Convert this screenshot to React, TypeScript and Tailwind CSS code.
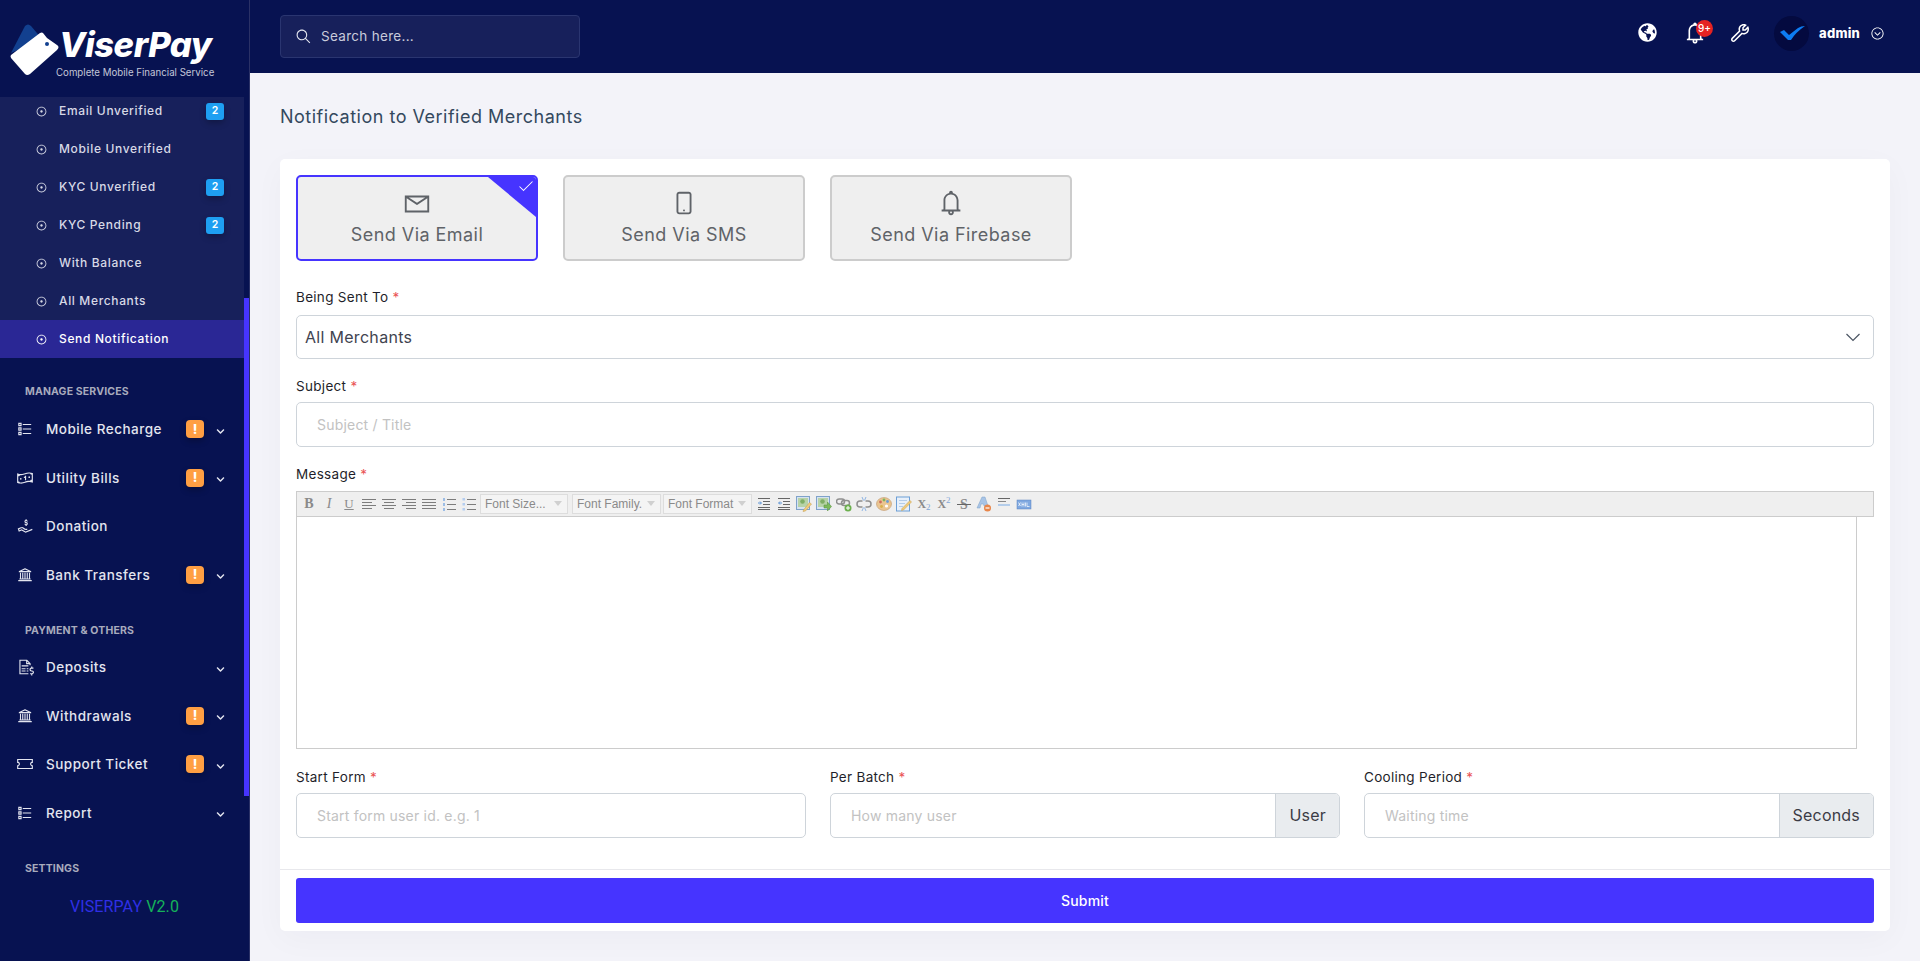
import React from 'react';
import { FaChevronDown, FaGlobeAmericas } from 'react-icons/fa';
import {
  LiaBell,
  LiaCheckSolid,
  LiaChevronCircleDownSolid,
  LiaDotCircle,
  LiaEnvelope,
  LiaFileInvoiceDollarSolid,
  LiaHandHoldingUsdSolid,
  LiaListSolid,
  LiaMobileSolid,
  LiaMoneyBillWaveAltSolid,
  LiaSearchSolid,
  LiaTicketAltSolid,
  LiaUniversitySolid,
  LiaWrenchSolid,
} from 'react-icons/lia';

const subMenu = [
  { label: 'Email Unverified', badge: true },
  { label: 'Mobile Unverified' },
  { label: 'KYC Unverified', badge: true },
  { label: 'KYC Pending', badge: true },
  { label: 'With Balance' },
  { label: 'All Merchants' },
  { label: 'Send Notification', active: true },
];

const services = [
  { label: 'Mobile Recharge', icon: LiaListSolid, warn: true, arrow: true },
  { label: 'Utility Bills', icon: LiaMoneyBillWaveAltSolid, warn: true, arrow: true },
  { label: 'Donation', icon: LiaHandHoldingUsdSolid },
  { label: 'Bank Transfers', icon: LiaUniversitySolid, warn: true, arrow: true },
];

const payments = [
  { label: 'Deposits', icon: LiaFileInvoiceDollarSolid, arrow: true },
  { label: 'Withdrawals', icon: LiaUniversitySolid, warn: true, arrow: true },
  { label: 'Support Ticket', icon: LiaTicketAltSolid, warn: true, arrow: true },
  { label: 'Report', icon: LiaListSolid, arrow: true },
];

const SectionTitle = ({ children }: { children: React.ReactNode }) => (
  <div className="flex h-5 items-center pt-[2px] pl-[25px] text-[10.5px] font-bold tracking-[0.15px] text-[#a8abbd]">{children}</div>
);

const MenuRow = ({ item }: { item: { label: string; icon: React.ElementType; warn?: boolean; arrow?: boolean } }) => {
  const Icon = item.icon;
  return (
    <div className="flex h-[48.5px] items-center pl-[16px] text-[#e3e5ef]">
      <Icon className="w-[18px] shrink-0 text-[18px]" />
      <span className="ml-[12px] flex-1 text-[13.5px] font-medium tracking-[0.5px]">{item.label}</span>
      {item.warn && (
        <span className="flex h-[18px] w-[18px] items-center justify-center rounded-[4px] bg-[#ff9f43] text-[13px] font-extrabold text-white shadow-[0_3px_6px_rgba(0,0,0,0.25)]">
          !
        </span>
      )}
      {item.arrow && <FaChevronDown className="mt-[4px] mr-[19px] ml-[12px] text-[9px] text-[#e3e5ef]" />}
    </div>
  );
};

const Req = ({ label }: { label: string }) => (
  <label className="block h-5 text-[13.5px] leading-5 font-normal tracking-[0.3px] text-[#1f1f2b]">
    {label} <span className="text-[#ea5455]">*</span>
  </label>
);

const MethodButton = ({ label, icon, active }: { label: string; icon: React.ReactNode; active?: boolean }) => (
  <div
    className={`relative flex h-[86px] w-[242px] flex-col items-center overflow-hidden rounded-[5px] border-2 bg-[#efefef] text-[#5f6368] ${
      active ? 'border-[#4634ff]' : 'border-[#cccccc]'
    }`}
  >
    {active && (
      <span className="absolute top-0 right-0 h-[40px] w-[48px] bg-[#4634ff] [clip-path:polygon(0_0,100%_0,100%_100%)]">
        <LiaCheckSolid className="absolute top-[1px] right-[2px] text-[16px] text-white" />
      </span>
    )}
    <span className="mt-[12px] flex h-[28px] items-center text-[30px]">{icon}</span>
    <span className="mt-[4px] text-[18px] font-normal tracking-[0.45px]">{label}</span>
  </div>
);

const Line = ({ y, x1 = 1, x2 = 15, c = '#7c7c7c' }: { y: number; x1?: number; x2?: number; c?: string }) => (
  <line x1={x1} x2={x2} y1={y} y2={y} stroke={c} strokeWidth="1" />
);

const Ico = ({ children }: { children: React.ReactNode }) => (
  <span className="flex w-5 shrink-0 items-center justify-center">
    <svg width="16" height="16" viewBox="0 0 16 16">
      {children}
    </svg>
  </span>
);

const Glyph = ({ children, className }: { children: React.ReactNode; className: string }) => (
  <span className={`flex w-5 shrink-0 items-center justify-center font-['Liberation_Serif',serif] text-[#8a8a8a] ${className}`}>
    {children}
  </span>
);

const FontSelect = ({ label, width }: { label: string; width: string }) => (
  <span className={`mr-[1px] ml-[1px] flex h-[20px] shrink-0 items-center justify-between border border-[#dddddd] bg-[#f4f4f4] pr-[5px] pl-[4px] font-['Liberation_Sans',sans-serif] text-[12px] text-[#8a8a8a] ${width}`}>
    <span>{label}</span>
    <span className="h-0 w-0 border-x-[4px] border-t-[5px] border-x-transparent border-t-[#d0d0d0]" />
  </span>
);

const EditorToolbar = () => (
  <div className="flex h-[26px] items-center border border-[#cccccc] bg-[#efefef] pl-[2px]">
    <Glyph className="text-[14px] font-bold">B</Glyph>
    <Glyph className="text-[14px] italic">I</Glyph>
    <Glyph className="text-[13px] underline">U</Glyph>
    <Ico>
      <Line y={3.5} /><Line y={6.5} x2={11} /><Line y={9.5} /><Line y={12.5} x2={11} />
    </Ico>
    <Ico>
      <Line y={3.5} /><Line y={6.5} x1={3} x2={13} /><Line y={9.5} /><Line y={12.5} x1={3} x2={13} />
    </Ico>
    <Ico>
      <Line y={3.5} /><Line y={6.5} x1={5} /><Line y={9.5} /><Line y={12.5} x1={5} />
    </Ico>
    <Ico>
      <Line y={3.5} /><Line y={6.5} /><Line y={9.5} /><Line y={12.5} />
    </Ico>
    <Ico>
      <Line y={3.5} x1={6} /><Line y={8.5} x1={6} /><Line y={13.5} x1={6} />
      <rect x="2" y="2" width="2" height="3" fill="#9cbde6" /><rect x="2" y="7" width="2" height="3" fill="#9cbde6" /><rect x="2" y="12" width="2" height="3" fill="#9cbde6" />
    </Ico>
    <Ico>
      <Line y={3.5} x1={6} /><Line y={8.5} x1={6} /><Line y={13.5} x1={6} />
      <rect x="1.5" y="2" width="2.5" height="2.5" fill="#b4cdf0" /><rect x="1.5" y="7" width="2.5" height="2.5" fill="#b4cdf0" /><rect x="1.5" y="12" width="2.5" height="2.5" fill="#b4cdf0" />
    </Ico>
    <FontSelect label="Font Size..." width="w-[88px]" />
    <span className="w-[2px] shrink-0" />
    <FontSelect label="Font Family." width="w-[89px]" />
    <FontSelect label="Font Format" width="w-[89px]" />
    <span className="w-[1px] shrink-0" />
    <Ico>
      <Line y={2.5} x1={2} x2={14} c="#666" /><Line y={5.5} x1={7} x2={14} c="#666" /><Line y={8.5} x1={7} x2={14} c="#666" /><Line y={11.5} x1={2} x2={14} c="#666" /><Line y={13.5} x1={2} x2={14} c="#666" />
      <path d="M2 7h3M4 5.5L5.5 7 4 8.5" stroke="#5b93d6" fill="none" />
    </Ico>
    <Ico>
      <Line y={2.5} x1={2} x2={14} c="#666" /><Line y={5.5} x1={7} x2={14} c="#666" /><Line y={8.5} x1={7} x2={14} c="#666" /><Line y={11.5} x1={2} x2={14} c="#666" /><Line y={13.5} x1={2} x2={14} c="#666" />
      <path d="M6 7H3M4 5.5L2.5 7 4 8.5" stroke="#5b93d6" fill="none" />
    </Ico>
    <Ico>
      <rect x="0.5" y="0.5" width="13" height="13" fill="#d5e2f2" stroke="#7fa2c9" />
      <rect x="2" y="2" width="10" height="9" fill="#b7d3a8" />
      <circle cx="6.500" cy="5.500" r="2.300" fill="#7fae66" />
      <path d="M7.500 14l6-7.500 2 1.500-6 7-2.500.5z" fill="#f0cc7c" stroke="#c49a4a" strokeWidth="0.500" />
    </Ico>
    <Ico>
      <rect x="0.5" y="0.5" width="13" height="13" fill="#d5e2f2" stroke="#7fa2c9" />
      <rect x="2" y="2" width="10" height="9" fill="#b7d3a8" />
      <circle cx="6.500" cy="5.500" r="2.300" fill="#7fae66" />
      <path d="M8 9h3.500V6l4 4.500-4 4.500v-3H8z" fill="#7cba5c" stroke="#568f3c" strokeWidth="0.500" />
    </Ico>
    <Ico>
      <rect x="0.5" y="3" width="8" height="5" rx="2.500" fill="none" stroke="#8f8f8f" strokeWidth="1.500" />
      <rect x="5.500" y="4.500" width="8" height="5" rx="2.500" fill="none" stroke="#8f8f8f" strokeWidth="1.500" />
      <circle cx="12" cy="12" r="3.500" fill="#6cb04e" />
      <path d="M12 10v4M10 12h4" stroke="#fff" strokeWidth="1" />
    </Ico>
    <Ico>
      <path d="M6.500 5H4a3 3 0 000 6h2.500M9.500 5H12a3 3 0 010 6H9.500" fill="none" stroke="#8f8f8f" strokeWidth="1.500" />
      <path d="M6 1l1.500 3.500M10 1L8.500 4.500M6 15l1.500-3.500M10 15l-1.500-3.500" stroke="#8eb4e3" strokeWidth="1" />
    </Ico>
    <Ico>
      <ellipse cx="8" cy="8" rx="7.500" ry="6.500" fill="#eac591" stroke="#b98a5a" strokeWidth="0.500" />
      <circle cx="4.500" cy="6" r="1.400" fill="#cf6c5c" /><circle cx="8" cy="4" r="1.400" fill="#7fb45e" /><circle cx="11.500" cy="5.500" r="1.400" fill="#6a9bd6" /><circle cx="10.500" cy="10" r="1.600" fill="#fff" /><circle cx="5.500" cy="10.500" r="1.400" fill="#d8b04a" />
    </Ico>
    <Ico>
      <rect x="0.5" y="1" width="13" height="14" fill="#e8f0fa" stroke="#6d9fd6" />
      <Line y={4.5} x1={3} x2={11} c="#b4cdea" /><Line y={7.5} x1={3} x2={9} c="#b4cdea" /><Line y={10.5} x1={3} x2={7} c="#b4cdea" />
      <path d="M6 12.500l8-8 1.500 1.500-8 8-2 .5z" fill="#f0cc7c" stroke="#c49a4a" strokeWidth="0.500" />
    </Ico>
    <Glyph className="text-[12px] font-bold">
      <span>X<sub className="text-[9px] font-normal text-[#7fa8d8]">2</sub></span>
    </Glyph>
    <Glyph className="text-[12px] font-bold">
      <span>X<sup className="text-[9px] font-normal text-[#7fa8d8]">2</sup></span>
    </Glyph>
    <Ico>
      <text x="8" y="12.500" textAnchor="middle" fontFamily="Liberation Serif, serif" fontWeight="700" fontSize="14" fill="#8a8a8a">S</text>
      <line x1="1" x2="15" y1="8.500" y2="8.500" stroke="#666" />
    </Ico>
    <Ico>
      <path d="M1 12L6 1h3l3 9H8l-.5-2H5l-1 4z" fill="#a8c4e6" stroke="#7fa2c9" strokeWidth="0.500" />
      <circle cx="11.500" cy="12" r="3.500" fill="#e8864a" />
      <path d="M9.500 12h4" stroke="#fff" strokeWidth="1.200" />
    </Ico>
    <Ico>
      <Line y={2.500} x1={2} x2={14} c="#666" /><Line y={5.500} x1={2} x2={10} c="#888" /><rect x="2" y="8" width="12" height="2" fill="#b4cdea" />
    </Ico>
    <Ico>
      <rect x="1" y="4" width="14" height="9" fill="#7fa8e0" stroke="#5b83c0" strokeWidth="0.500" />
      <path d="M2.500 6.500l2 3.500M4.500 6.500l-2 3.500M6 6.500v4M6 8.500h2M8 6.500v4M9.500 6.500v4M11 6.500v4M11 10.500h2.500" stroke="#fff" strokeWidth="0.700" fill="none" />
    </Ico>
  </div>
);

const Addon = ({ children }: { children: React.ReactNode }) => (
  <span className="flex items-center border-l border-[#ced4da] bg-[#e9ecef] px-[13px] text-[16px] tracking-[0.2px] text-[#3b3b45]">{children}</span>
);

export default function App() {
  return (
    <div className="flex h-[961px] overflow-hidden bg-[#f3f3f9] font-[Inter,sans-serif]">
      {/* sidebar */}
      <aside className="relative flex h-full w-[250px] shrink-0 flex-col border-r border-[#2a3166] bg-[#071251]">
        <div className="relative z-10 flex h-[97px] shrink-0 bg-[#071251] pt-[24px] pl-[10px]">
          <svg width="50" height="54" viewBox="0 0 50 54" className="shrink-0">
            <path d="M1 29L15 2q3-3 6 0l11 13z" fill="#12408f" />
            <path d="M1 31L30 9q2-1 3 0l4 5 10 7q3 2 0 5L20 50q-3 2-5 0L1 34q-1-2 0-3z" fill="#ffffff" />
            <circle cx="37" cy="20" r="2" fill="#12408f" />
          </svg>
          <div className="-ml-[1px] flex flex-col">
            <span className="text-[34.5px] leading-[42px] font-extrabold tracking-[-0.5px] text-white italic">ViserPay</span>
            <span className="-ml-[3px] text-[9.7px] leading-[13px] text-[#c3c6d8]">Complete Mobile Financial Service</span>
          </div>
        </div>

        <div className="w-[244px] overflow-hidden">
          <div className="-mt-[5px] bg-[#17205b]">
            {subMenu.map(item => (
              <div
                key={item.label}
                className={`flex h-[38px] items-center pl-[35px] text-[12px] font-medium tracking-[0.65px] text-[#d7d9e6] ${
                  item.active ? 'bg-[#2a2795] text-white' : ''
                }`}
              >
                <LiaDotCircle className="text-[13px]" />
                <span className="ml-[11px] flex-1">{item.label}</span>
                {item.badge && (
                  <span className="mr-[20px] flex h-[17px] w-[18px] items-center justify-center rounded-[3px] bg-[#1e9ff2] text-[10.5px] font-semibold tracking-normal text-white shadow-[0_3px_6px_rgba(0,0,0,0.25)]">
                    2
                  </span>
                )}
              </div>
            ))}
          </div>

          <div className="mt-[23px]">
            <SectionTitle>MANAGE SERVICES</SectionTitle>
            <div className="mt-[4px]">
              {services.map(item => (
                <MenuRow key={item.label} item={item} />
              ))}
            </div>
          </div>

          <div className="mt-[21px]">
            <SectionTitle>PAYMENT &amp; OTHERS</SectionTitle>
            <div className="mt-[3px]">
              {payments.map(item => (
                <MenuRow key={item.label} item={item} />
              ))}
            </div>
          </div>

          <div className="mt-[21px]">
            <SectionTitle>SETTINGS</SectionTitle>
          </div>
          <div className="mt-[19px] pl-[70px] font-[Roboto,sans-serif] text-[16px] leading-5 tracking-[0.1px]">
            <span className="text-[#2f2fe6]">VISERPAY</span> <span className="text-[#15b35a]">V2.0</span>
          </div>
        </div>

        {/* scrollbar thumb */}
        <div className="absolute top-[298px] right-0 h-[498px] w-[5px] bg-[#4634ff]" />
      </aside>

      <div className="flex min-w-0 flex-1 flex-col">
        {/* top bar */}
        <header className="flex h-[73px] shrink-0 items-center bg-[#071251] pr-[35px] pl-[30px]">
          <div className="flex h-[43px] w-[300px] items-center rounded-[4px] border border-[#2a3570] bg-[#17205b] pl-[14px] text-[#c9cbdb]">
            <LiaSearchSolid className="-scale-x-100 text-[17px] text-[#e3e5ef]" />
            <span className="ml-[9px] text-[13.5px] tracking-[0.3px]">Search here...</span>
          </div>
          <div className="ml-auto -mt-[7px] flex items-center text-white">
            <FaGlobeAmericas className="-mt-[1px] text-[19px]" />
            <span className="relative ml-[25px] flex">
              <LiaBell className="text-[26px]" />
              <span className="absolute top-0 left-[14px] flex h-[17px] w-[17px] items-center justify-center rounded-full bg-[#e52222] text-[10px] font-medium text-white">
                9+
              </span>
            </span>
            <LiaWrenchSolid className="ml-[20px] text-[24px]" />
            <span className="ml-[22px] flex h-[35px] w-[35px] items-center justify-center rounded-full bg-[#040a3f]">
              <svg width="28" height="18" viewBox="0 0 28 18">
                <path d="M2 8l4-2 5 5 9-7q3-2 7-2-9 6-14 14h-3z" fill="#0d7cf2" />
              </svg>
            </span>
            <span className="mt-[2px] ml-[10px] text-[13px] font-extrabold tracking-[0.2px]">admin</span>
            <LiaChevronCircleDownSolid className="mt-[1px] ml-[10px] text-[15px]" />
          </div>
        </header>

        <main className="flex-1 px-[30px]">
          <h1 className="flex h-[86px] items-center pt-[1px] text-[18px] font-normal tracking-[0.5px] text-[#34495e]">
            Notification to Verified Merchants
          </h1>

          <div className="rounded-[5px] bg-white shadow-[0_8px_32px_rgba(0,0,60,0.03)]">
            <div className="px-[16px] pt-[16px] pb-[31px]">
              <div className="flex gap-[25px]">
                <MethodButton active label="Send Via Email" icon={<LiaEnvelope />} />
                <MethodButton label="Send Via SMS" icon={<LiaMobileSolid />} />
                <MethodButton label="Send Via Firebase" icon={<LiaBell />} />
              </div>

              <div className="mt-[26px]">
                <Req label="Being Sent To" />
              </div>
              <div className="mt-[7.5px] flex h-[44px] items-center justify-between rounded-[5px] border border-[#ced4da] bg-white pr-[12px] pl-[8px] text-[16px] tracking-[0.3px] text-[#3f4450]">
                <span className="pt-[1px]">All Merchants</span>
                <svg width="16" height="16" viewBox="0 0 16 16" fill="none" stroke="#4b5563" strokeWidth="1.200">
                  <path d="M1.500 5l6.500 6.500L14.500 5" />
                </svg>
              </div>

              <div className="mt-[17px]">
                <Req label="Subject" />
              </div>
              <div className="mt-[6px] flex h-[45px] items-center rounded-[5px] border border-[#ced4da] bg-white pl-[20px] text-[14px] tracking-[0.2px] text-[#c2c2c2]">
                Subject / Title
              </div>

              <div className="mt-[17px]">
                <Req label="Message" />
              </div>
              <div className="mt-[7px]">
                <EditorToolbar />
                <div className="h-[232px] w-[1560.500px] border border-t-0 border-[#cccccc] bg-white" />
              </div>

              <div className="mt-[18.500px] grid grid-cols-3 gap-x-[24px]">
                <div>
                  <Req label="Start Form" />
                  <div className="mt-[5.500px] flex h-[45px] items-center rounded-[5px] border border-[#ced4da] pl-[20px] text-[14px] tracking-[0.2px] text-[#c2c2c2]">
                    Start form user id. e.g. 1
                  </div>
                </div>
                <div>
                  <Req label="Per Batch" />
                  <div className="mt-[5.500px] flex h-[45px] overflow-hidden rounded-[5px] border border-[#ced4da]">
                    <span className="flex flex-1 items-center pl-[20px] text-[14px] tracking-[0.2px] text-[#c2c2c2]">How many user</span>
                    <Addon>User</Addon>
                  </div>
                </div>
                <div>
                  <Req label="Cooling Period" />
                  <div className="mt-[5.500px] flex h-[45px] overflow-hidden rounded-[5px] border border-[#ced4da]">
                    <span className="flex flex-1 items-center pl-[20px] text-[14px] tracking-[0.2px] text-[#c2c2c2]">Waiting time</span>
                    <Addon>Seconds</Addon>
                  </div>
                </div>
              </div>
            </div>

            <div className="border-t border-[#e8e8ec] px-[16px] pt-[8px] pb-[8px]">
              <div className="flex h-[45px] items-center justify-center rounded-[3px] bg-[#4634ff] text-[14px] font-medium tracking-[0.2px] text-white">
                Submit
              </div>
            </div>
          </div>
        </main>
      </div>
    </div>
  );
}
